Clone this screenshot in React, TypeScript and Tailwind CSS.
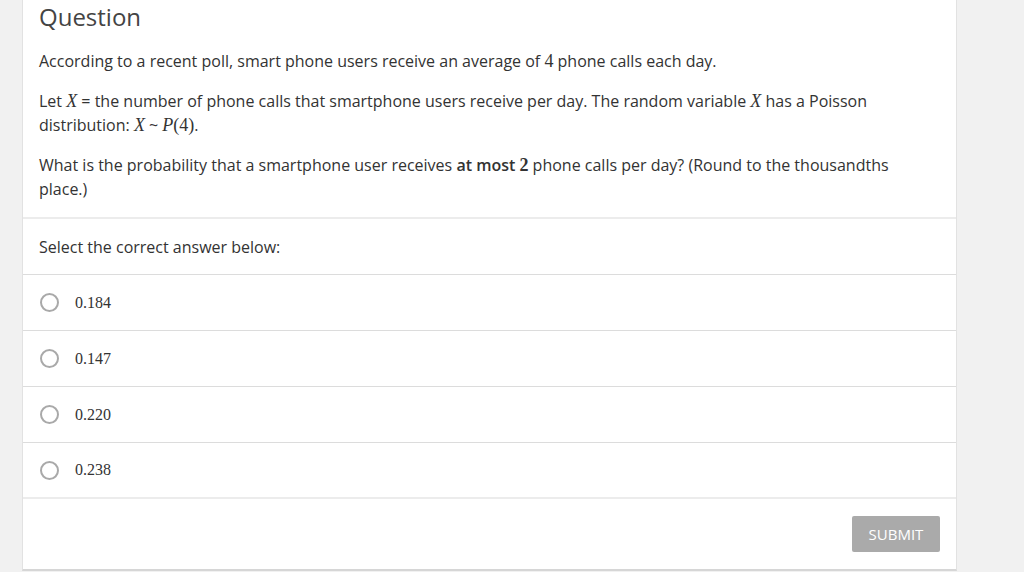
import React from "react";

const OPTIONS = ["0.184", "0.147", "0.220", "0.238"];

const M = ({ children, italic = true }: { children: React.ReactNode; italic?: boolean }) => (
  <span
    className={`font-['Liberation_Serif',serif] text-[18px] leading-none ${italic ? "italic" : ""}`}
  >
    {children}
  </span>
);

export default function App() {
  return (
    <div className="min-h-[572px] bg-[#f1f1f1] font-['Open_Sans',sans-serif] text-[#333]">
      <div className="ml-[22px] w-[935px] border-x border-b-2 border-x-[#e2e2e2] border-b-[#d6d6d6] bg-white">
        <div className="border-b-2 border-[#ececec] px-4 pb-4 pt-[2px]">
          <h1 className="text-[24px] leading-[29px] text-[#444]">Question</h1>
          <div className="mt-[18px] text-[16px] leading-6">
            <p className="mb-4">
              According to a recent poll, smart phone users receive an average of <M italic={false}>4</M> phone calls each day.
            </p>
            <p className="mb-4">
              Let <M>X</M> = the number of phone calls that smartphone users receive per day. The random variable <M>X</M> has a Poisson distribution: <M>X</M> ~ <M>P</M>
              <M italic={false}>(4)</M>.
            </p>
            <p>
              What is the probability that a smartphone user receives{" "}
              <span className="font-semibold">
                at most <span className="font-['Liberation_Serif',serif] text-[18px] leading-none">2</span>
              </span>{" "}
              phone calls per day? (Round to the thousandths place.)
            </p>
          </div>
        </div>
        <div className="flex h-[56px] items-center border-b border-[#dcdcdc] px-4 text-[16px]">
          Select the correct answer below:
        </div>
        {OPTIONS.map((o, i) => (
          <label
            key={o}
            className={`flex h-[56px] items-center gap-4 px-4 ${
              i === OPTIONS.length - 1 ? "border-b-2 border-[#ececec]" : "border-b border-[#dcdcdc]"
            }`}
          >
            <span className="ml-px h-[19px] w-[19px] rounded-full border-2 border-[#a9a9a9]" />
            <span className="font-['Liberation_Serif',serif] text-[16px] text-[#333]">{o}</span>
          </label>
        ))}
        <div className="flex justify-end px-4 py-[17px]">
          <button className="h-9 w-[88px] rounded-[2px] bg-[#aaaaaa] text-[15px] text-white">
            SUBMIT
          </button>
        </div>
      </div>
    </div>
  );
}
